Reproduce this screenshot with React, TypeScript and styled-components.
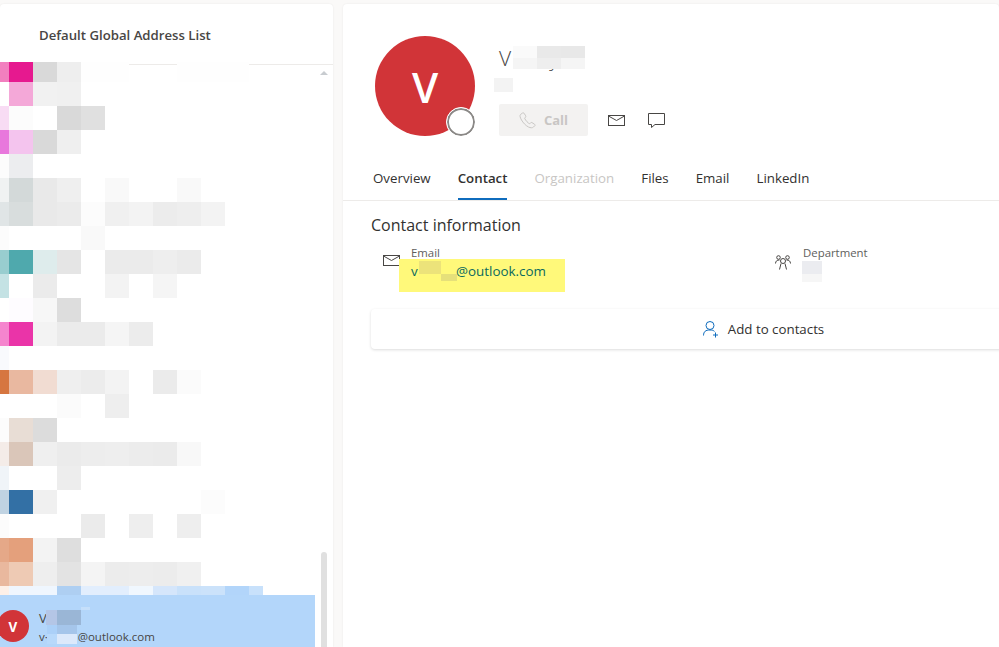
import React from 'react';
import styled, { createGlobalStyle } from 'styled-components';

const FONT = '"Open Sans", "Noto Sans", "Liberation Sans", sans-serif';

const GlobalStyle = createGlobalStyle`
  html, body {
    margin: 0;
    height: 100%;
    background: #faf9f8;
    font-family: ${FONT};
    color: #323130;
  }
  * { box-sizing: border-box; }
`;

// privacy mosaic over the contact list: 12 columns, one row per array
const MOSAIC: string[][] = [
  ['#f27fbf', '#e6198f', '#d9d9d9', '#eeeeee', '#fefefe', '#fefefe', '', '', '#fefefe', '#fefefe', '#fefefe'],
  ['', '#f4a8d8', '#f1f1f1', '#f0f0f0'],
  ['#f8dcf4', '#fcfcfc', '', '#d9d9d9', '#e0e0e0'],
  ['#e878dc', '#f4c4ee', '#d9d9d9', '#efefef'],
  ['#fcfcfc', '#ecedef'],
  ['#f0f2f2', '#d3d9d9', '#e9e9e9', '#efefef', '', '#f9f9f9', '', '', '#f9f9f9'],
  ['#e0e5e6', '#d8dddd', '#e9e9e9', '#ebebeb', '#fcfcfc', '#f0f0f0', '#f3f3f3', '#ececec', '#eeeeee', '#f3f3f3'],
  ['#fcfcfc', '', '', '', '#f9f9f9'],
  ['#98cdcf', '#4fa9ad', '#deecec', '#e5e5e5', '', '#ebebeb', '#ebebeb', '#eeeeee', '#ebebeb'],
  ['#c4e2e4', '', '#ebebeb', '', '', '#f3f3f3', '', '#f5f5f5'],
  ['', '#fefcff', '#f7f7f7', '#dddddd'],
  ['#f585ce', '#ea34a8', '#f3f3f3', '#ebebeb', '#ebebeb', '#f5f5f5', '#ececec'],
  ['#f9fafd'],
  ['#d67640', '#e9b8a0', '#f1dcd2', '#efefef', '#ececec', '#f3f3f3', '', '#ebebeb', '#fbfbfb'],
  ['', '', '', '#fbfbfb', '', '#eeeeee'],
  ['#fcfcfc', '#e8ddd5', '#dcdcdc'],
  ['#f4ece8', '#dac6b9', '#efefef', '#ebebeb', '#ededed', '#eeeeee', '#ececec', '#ebebeb', '#f8f8f8'],
  ['#f0f4f8', '', '', '#ededed'],
  ['#c0d3e2', '#3370a5', '#f0f0f0', '', '', '', '', '', '', '#fcfcfc'],
  ['#fcfcfc', '', '', '', '#ebebeb', '', '#eeeeee', '', '#eeeeee'],
  ['#e5a888', '#e4a07c', '#f3f3f3', '#dedede'],
  ['#e9b89e', '#eecab4', '#eeeeee', '#e3e3e3', '#f4f4f4', '#ececec', '#ededed', '#ececec', '#f0f0f0'],
  ['#fdf0e8', '#eff6fe', '#eff6fe', '#aecff2', '#e2eefd', '#e2eefd', '#f0f7fe', '#d5e6fb', '#c9e1fa', '#cbe2fa', '#b2d5fa', '#c8e1fb'],
];

const TABS = [
  { label: 'Overview' },
  { label: 'Contact', active: true },
  { label: 'Organization', disabled: true },
  { label: 'Files' },
  { label: 'Email' },
  { label: 'LinkedIn' },
];

const Page = styled.div`
  display: flex;
  gap: 10px;
  height: 647px;
  padding-top: 4px;
  overflow: hidden;
`;

const Card = styled.section`
  background: #fff;
  border-radius: 4px 4px 0 0;
  box-shadow: 0 0 2px rgba(0, 0, 0, 0.08);
`;

const ListPanel = styled(Card)`
  flex: 0 0 333px;
  display: flex;
  flex-direction: column;
`;

const ListHeader = styled.header`
  flex: 0 0 61px;
  padding: 20px 0 0 39px;
  border-bottom: 1px solid #edebe9;
  font-size: 13.2px;
  font-weight: 600;
  line-height: 22px;
  color: #484644;
`;

const ListBody = styled.div`
  flex: 1;
  display: flex;
  margin-top: -3px;
  min-height: 0;
`;

const ListColumn = styled.div`
  flex: 0 0 315px;
  display: flex;
  flex-direction: column;
`;

const Mosaic = styled.div`
  display: grid;
  grid-template-columns: 9px repeat(10, 24px) 14px;
  grid-template-rows: 20px repeat(21, 24px) 9px;
  height: 533px;
  width: 263px;
`;

const Cell = styled.div<{ $c: string }>`
  background: ${(p) => p.$c || 'transparent'};
`;

const SelectedRow = styled.div`
  position: relative;
  flex: 0 0 52px;
  display: flex;
  align-items: flex-start;
  gap: 10px;
  padding: 15px 0 0 0;
  background: #b3d6fa;
`;

const SmallAvatar = styled.div`
  flex: 0 0 32px;
  height: 32px;
  margin-left: -3px;
  border-radius: 50%;
  background: #d13438;
  color: #fff;
  font-size: 13.5px;
  font-weight: 700;
  display: flex;
  align-items: center;
  justify-content: center;
  padding-top: 1px;
`;

const RowText = styled.div`
  display: flex;
  flex-direction: column;
  color: #484644;
`;

const RowName = styled.div`
  font-size: 13px;
  line-height: 17px;
  height: 18px;
`;

const RowMail = styled.div`
  font-size: 11.5px;
  line-height: 18px;
  height: 18px;
  white-space: pre;
`;

const Blot = styled.div<{ $x: number; $y: number; $w: number; $h: number; $c: string }>`
  position: absolute;
  left: ${(p) => p.$x}px;
  top: ${(p) => p.$y}px;
  width: ${(p) => p.$w}px;
  height: ${(p) => p.$h}px;
  background: ${(p) => p.$c};
`;

const ScrollColumn = styled.div`
  flex: 1;
  display: flex;
  flex-direction: column;
  justify-content: space-between;
  align-items: center;
  padding: 9px 0 0 0;
`;

const ScrollUp = styled.div`
  width: 0;
  height: 0;
  border-left: 4px solid transparent;
  border-right: 4px solid transparent;
  border-bottom: 4px solid #c8ccd0;
`;

const ScrollThumb = styled.div`
  width: 6px;
  height: 95px;
  border-radius: 3px 3px 0 0;
  background: #e0e0e0;
`;

const DetailPanel = styled(Card)`
  flex: 1;
  min-width: 0;
  display: flex;
  flex-direction: column;
  overflow: hidden;
`;

const Profile = styled.div`
  display: flex;
  gap: 24px;
  padding: 32px 0 0 32px;
`;

const AvatarWrap = styled.div`
  position: relative;
  flex: 0 0 100px;
  height: 100px;
`;

const BigAvatar = styled.div`
  width: 100px;
  height: 100px;
  border-radius: 50%;
  background: #d13438;
  color: #fff;
  font-size: 42px;
  font-weight: 600;
  display: flex;
  align-items: center;
  justify-content: center;
`;

const Presence = styled.div`
  position: absolute;
  right: -1px;
  bottom: -1px;
  width: 30px;
  height: 30px;
  border-radius: 50%;
  background: #fff;
  border: 1px solid #fff;
  box-shadow: inset 0 0 0 2px #8a8886;
`;

const ProfileInfo = styled.div`
  position: relative;
  display: flex;
  flex-direction: column;
`;

const ProfileName = styled.div`
  font-size: 21px;
  font-weight: 300;
  line-height: 28px;
  height: 68px;
  padding-top: 8px;
  color: #484644;
  white-space: pre;
`;

const Actions = styled.div`
  display: flex;
  align-items: center;
  gap: 20px;
`;

const CallButton = styled.button`
  width: 89px;
  height: 32px;
  display: flex;
  align-items: center;
  justify-content: center;
  gap: 8px;
  border: 0;
  border-radius: 2px;
  background: #f3f2f1;
  color: #c8c6c4;
  font-family: inherit;
  font-size: 13px;
  font-weight: 700;
`;

const IconSlot = styled.span`
  display: flex;
  width: 17px;
  justify-content: center;

  & + & {
    margin-left: 3px;
  }
`;

const Tabs = styled.nav`
  display: flex;
  gap: 27px;
  height: 45px;
  margin-top: 20px;
  padding-left: 30px;
  border-bottom: 1px solid #edebe9;
`;

const Tab = styled.div<{ $active?: boolean; $disabled?: boolean }>`
  height: 44px;
  padding-top: 11px;
  font-size: 13.3px;
  line-height: 22px;
  font-weight: ${(p) => (p.$active ? 600 : 400)};
  color: ${(p) => (p.$disabled ? '#c8c6c4' : '#323130')};
  border-bottom: 2px solid ${(p) => (p.$active ? '#0f6cbd' : 'transparent')};
`;

const ContactSection = styled.div`
  padding: 12px 0 0 28px;
  display: flex;
  flex-direction: column;
`;

const SectionTitle = styled.h2`
  margin: 0;
  font-size: 16px;
  font-weight: 400;
  line-height: 24px;
  color: #323130;
`;

const FieldGrid = styled.div`
  display: grid;
  grid-template-columns: 392px 1fr;
  height: 72px;
  padding: 8px 0 0 12px;
`;

const Field = styled.div`
  display: flex;
  gap: 12px;
`;

const FieldIcon = styled.span<{ $slim?: boolean }>`
  flex: 0 0 16px;
  padding-top: 10px;
  display: flex;
  margin-right: ${(p) => (p.$slim ? 0 : -1)}px;
`;

const FieldBody = styled.div`
  position: relative;
  display: flex;
  flex-direction: column;
`;

const FieldLabel = styled.div`
  position: relative;
  font-size: 11.4px;
  line-height: 16px;
  color: #605e5c;
`;

const Highlight = styled.div`
  position: absolute;
  left: -12px;
  top: 14px;
  width: 166px;
  height: 33px;
  background: #fff97a;
`;

const FieldValue = styled.div`
  position: relative;
  font-size: 13.4px;
  line-height: 20px;
  color: #0b6a5e;
  white-space: pre;
`;

const AddCard = styled.div`
  width: 785px;
  height: 40px;
  display: flex;
  align-items: center;
  justify-content: center;
  gap: 9px;
  border-radius: 4px 0 0 4px;
  background: #fff;
  box-shadow: 0 1px 3px rgba(0, 0, 0, 0.14);
  font-size: 13.3px;
  color: #323130;
`;

const Stroke = { fill: 'none', stroke: 'currentColor', strokeWidth: 1 } as const;

const MailIcon = () => (
  <svg width="17" height="11" viewBox="0 0 17 11" color="#484644">
    <rect x="0.5" y="0.5" width="16" height="10" {...Stroke} />
    <path d="M0.5 1L8.5 5.5L16.5 1" {...Stroke} />
  </svg>
);

const ChatIcon = () => (
  <svg width="17" height="15" viewBox="0 0 17 15" color="#484644">
    <path d="M0.5 0.5H16.5V11.5H7L3.5 14.5V11.5H0.5Z" {...Stroke} />
  </svg>
);

const PhoneIcon = () => (
  <svg width="17" height="17" viewBox="0 0 17 17" color="#c8c6c4">
    <path
      d="M3.5 1L1.5 2.5C0.6 3.5 1 5.5 2.5 8C4 10.6 6.5 13.5 9.5 15C11.5 16 13.5 16 14.5 15L16 13.5C16.2 13 16 12.6 15.6 12.3L13 10.6C12.5 10.3 12 10.4 11.6 10.8L10.6 11.8C9.5 11.5 6.5 8.5 5.6 6.2L6.5 5.2C6.9 4.8 6.9 4.3 6.7 3.8L5 1.2C4.7 0.8 4 0.7 3.5 1Z"
      {...Stroke}
    />
  </svg>
);

const PeopleIcon = () => (
  <svg width="16" height="15" viewBox="0 0 16 15" color="#484644">
    <circle cx="3.5" cy="2.5" r="1.8" {...Stroke} />
    <circle cx="12.5" cy="2.5" r="1.8" {...Stroke} />
    <circle cx="8" cy="6" r="2.5" {...Stroke} />
    <path d="M0.5 8.5C0.7 6 2 5 4.5 5M15.5 8.5C15.3 6 14 5 11.5 5M4.5 14.5L6 8.5M11.5 14.5L10 8.5" {...Stroke} />
  </svg>
);

const AddPersonIcon = () => (
  <svg width="16" height="17" viewBox="0 0 16 17" color="#0f6cbd">
    <circle cx="7" cy="4.5" r="4" {...Stroke} />
    <path d="M0.5 14.5C0.7 10.5 2.5 9 7 9C9 9 10.6 9.4 11.5 10.4" {...Stroke} />
    <path d="M12.5 11.5V16.5M10 14H15" {...Stroke} />
  </svg>
);

const App: React.FC = () => (
  <Page>
    <GlobalStyle />
    <ListPanel>
      <ListHeader>Default Global Address List</ListHeader>
      <ListBody>
        <ListColumn>
          <Mosaic>
            {MOSAIC.map((row, r) =>
              Array.from({ length: 12 }, (_, c) => <Cell key={`${r}-${c}`} $c={row[c] ?? ''} />)
            )}
          </Mosaic>
          <SelectedRow>
            <SmallAvatar>V</SmallAvatar>
            <RowText>
              <RowName>V</RowName>
              <RowMail>{'v·          @outlook.com'}</RowMail>
            </RowText>
            <Blot $x={81} $y={12} $w={9} $h={3} $c="#c5dffa" />
            <Blot $x={46} $y={15} $w={11} $h={15} $c="#b4c6e6" />
            <Blot $x={57} $y={15} $w={24} $h={15} $c="#9ab6d6" />
            <Blot $x={47} $y={30} $w={10} $h={9} $c="#abd0f8" />
            <Blot $x={57} $y={30} $w={20} $h={9} $c="#a5c5ea" />
            <Blot $x={47} $y={39} $w={10} $h={10} $c="#b8d9fb" />
            <Blot $x={57} $y={39} $w={20} $h={10} $c="#dce9fb" />
          </SelectedRow>
        </ListColumn>
        <ScrollColumn>
          <ScrollUp />
          <ScrollThumb />
        </ScrollColumn>
      </ListBody>
    </ListPanel>

    <DetailPanel>
      <Profile>
        <AvatarWrap>
          <BigAvatar>V</BigAvatar>
          <Presence />
        </AvatarWrap>
        <ProfileInfo>
          <ProfileName>{'V       y'}</ProfileName>
          <Blot $x={14} $y={10} $w={24} $h={12} $c="#fafafa" />
          <Blot $x={38} $y={10} $w={24} $h={12} $c="#e9e9e9" />
          <Blot $x={62} $y={10} $w={24} $h={12} $c="#e8e8e8" />
          <Blot $x={14} $y={22} $w={24} $h={11} $c="#f5f5f5" />
          <Blot $x={38} $y={22} $w={24} $h={11} $c="#eeeeee" />
          <Blot $x={62} $y={22} $w={24} $h={11} $c="#f5f5f5" />
          <Blot $x={-5} $y={42} $w={19} $h={14} $c="#f3f3f3" />
          <Actions>
            <CallButton>
              <PhoneIcon />
              Call
            </CallButton>
            <IconSlot>
              <MailIcon />
            </IconSlot>
            <IconSlot>
              <ChatIcon />
            </IconSlot>
          </Actions>
        </ProfileInfo>
      </Profile>

      <Tabs>
        {TABS.map((t) => (
          <Tab key={t.label} $active={t.active} $disabled={t.disabled}>
            {t.label}
          </Tab>
        ))}
      </Tabs>

      <ContactSection>
        <SectionTitle>Contact information</SectionTitle>
        <FieldGrid>
          <Field>
            <FieldIcon>
              <MailIcon />
            </FieldIcon>
            <FieldBody>
              <Highlight />
              <FieldLabel>Email</FieldLabel>
              <FieldValue>{'v           @outlook.com'}</FieldValue>
              <Blot $x={8} $y={16} $w={22} $h={13} $c="#ece37a" />
              <Blot $x={30} $y={29} $w={16} $h={7} $c="#e6e07a" />
            </FieldBody>
          </Field>
          <Field>
            <FieldIcon $slim>
              <PeopleIcon />
            </FieldIcon>
            <FieldBody>
              <FieldLabel>Department</FieldLabel>
              <Blot $x={-1} $y={16} $w={20} $h={13} $c="#ebecf0" />
              <Blot $x={-1} $y={29} $w={20} $h={8} $c="#f6f6f6" />
            </FieldBody>
          </Field>
        </FieldGrid>
        <AddCard>
          <AddPersonIcon />
          Add to contacts
        </AddCard>
      </ContactSection>
    </DetailPanel>
  </Page>
);

export default App;
